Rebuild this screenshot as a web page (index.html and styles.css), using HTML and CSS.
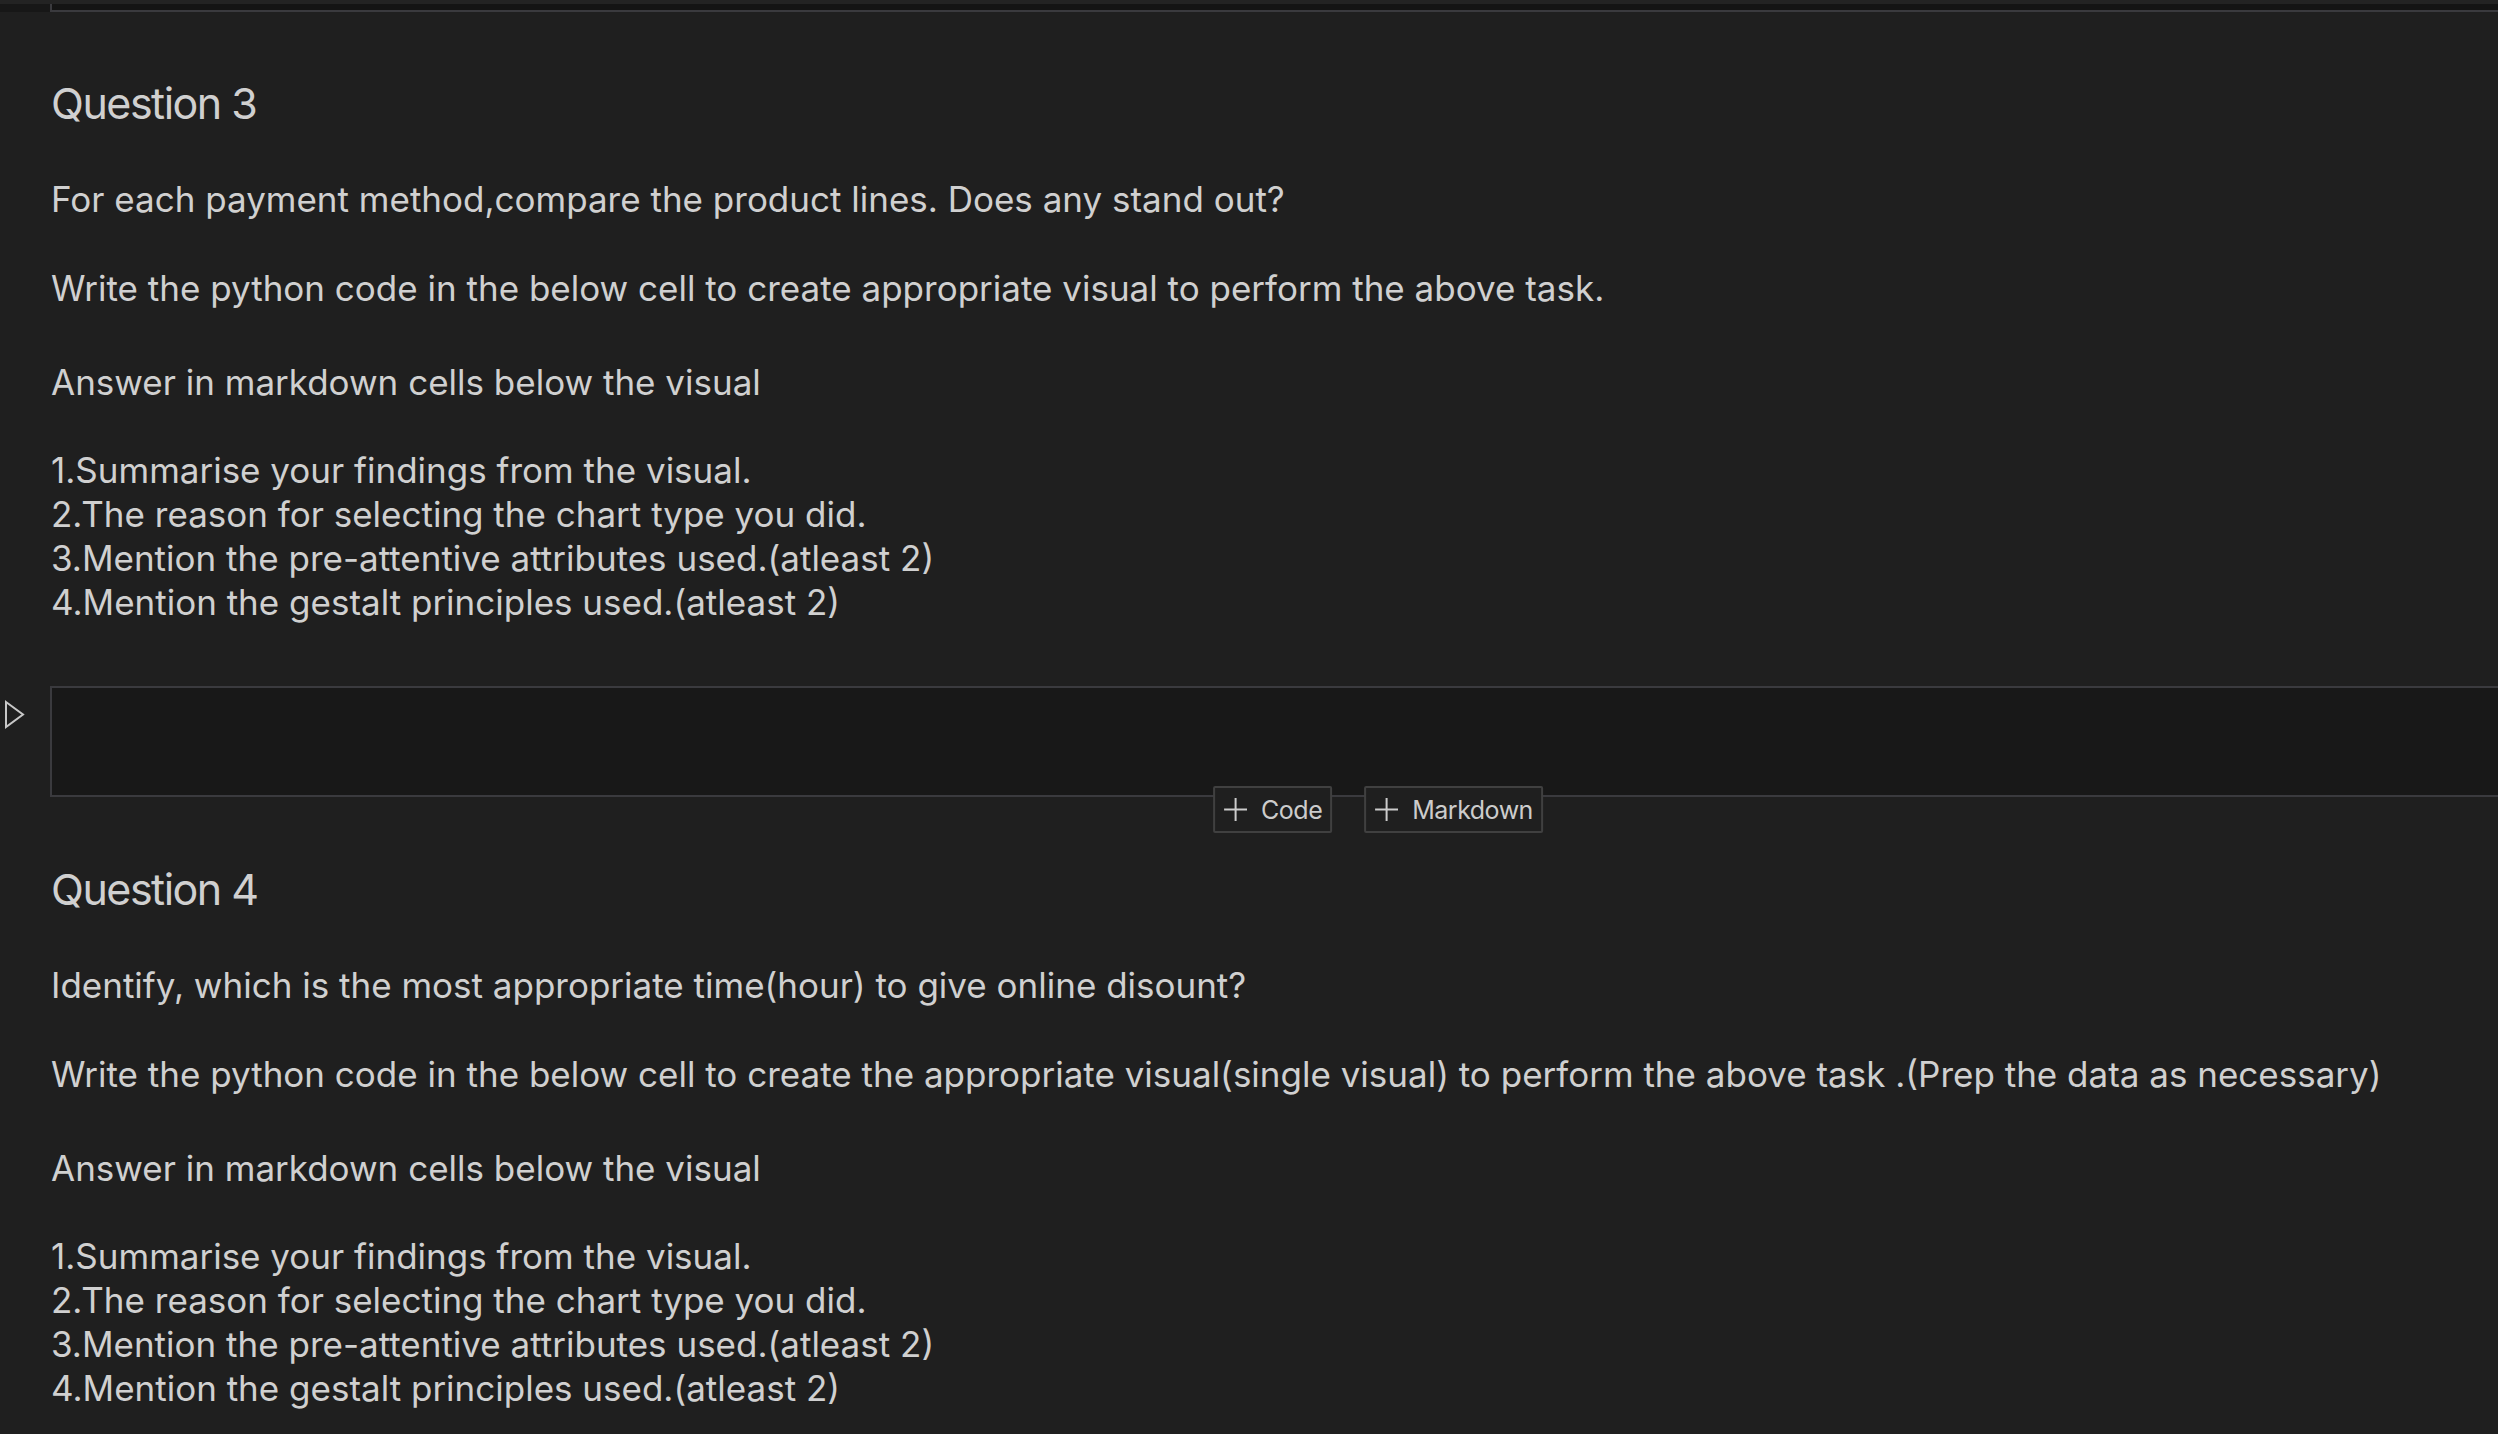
FILE: index.html
```html
<!DOCTYPE html>
<html lang="en">
<head>
<meta charset="utf-8">
<title>Notebook</title>
<link rel="stylesheet" href="styles.css">
</head>
<body>
<div class="top-strip"></div>
<div class="prev-row">
  <div class="prev-gutter"></div>
  <div class="prev-cell"></div>
</div>

<section class="md">
  <h2 class="q">Question 3</h2>
  <p class="p">For each payment method,compare the product lines. Does any stand out?</p>
  <p class="p p-write">Write the python code in the below cell to create appropriate visual to perform the above task.</p>
  <p class="p p-answer">Answer in markdown cells below the visual</p>
  <p class="p list">1.Summarise your findings from the visual.<br>2.The reason for selecting the chart type you did.<br>3.Mention the pre-attentive attributes used.(atleast 2)<br>4.Mention the gestalt principles used.(atleast 2)</p>
</section>

<div class="cell-row">
  <div class="gutter">
    <svg class="run" width="22" height="30" viewBox="0 0 22 30"><polygon points="2,2 19,14.5 2,27" fill="none" stroke="#c8c8c8" stroke-width="2" stroke-linejoin="miter"/></svg>
  </div>
  <div class="cell">
    <div class="toolbar">
      <button class="btn"><svg class="plus" width="23" height="23" viewBox="0 0 23 23"><path d="M11.5 0V23M0 11.5H23" stroke="#cccccc" stroke-width="2"/></svg><span>Code</span></button>
      <button class="btn"><svg class="plus" width="23" height="23" viewBox="0 0 23 23"><path d="M11.5 0V23M0 11.5H23" stroke="#cccccc" stroke-width="2"/></svg><span>Markdown</span></button>
    </div>
  </div>
</div>

<section class="md md2">
  <h2 class="q">Question 4</h2>
  <p class="p">Identify, which is the most appropriate time(hour) to give online disount?</p>
  <p class="p p-write">Write the python code in the below cell to create the appropriate visual(single visual) to perform the above task .(Prep the data as necessary)</p>
  <p class="p p-answer">Answer in markdown cells below the visual</p>
  <p class="p list">1.Summarise your findings from the visual.<br>2.The reason for selecting the chart type you did.<br>3.Mention the pre-attentive attributes used.(atleast 2)<br>4.Mention the gestalt principles used.(atleast 2)</p>
</section>
</body>
</html>
```

FILE: styles.css
```css
html, body {
  margin: 0;
  padding: 0;
}
body {
  width: 2498px;
  height: 1434px;
  overflow: hidden;
  background: #1f1f1f;
  color: #d0d0d0;
  font-family: Inter, "Noto Sans", "Liberation Sans", sans-serif;
}

.top-strip {
  height: 4px;
  background: #232323;
}
.prev-row {
  display: flex;
  height: 8px;
}
.prev-gutter {
  width: 50px;
  background: #171717;
}
.prev-cell {
  flex: 1;
  background: #141414;
  border-left: 2px solid #3a3a3e;
  border-bottom: 2px solid #3a3a3e;
}

.md {
  padding-left: 51px;
  padding-top: 65px;
}
.md2 {
  padding-top: 66px;
}
.q {
  margin: 0 0 48px 0;
  font-size: 43px;
  line-height: 52px;
  font-weight: 400;
  letter-spacing: -1.5px;
  color: #d0d0d0;
}
.p {
  margin: 0 0 45px 0;
  font-size: 35px;
  line-height: 44px;
  letter-spacing: 0;
  white-space: nowrap;
}
.p-write {
  margin-bottom: 50px;
}
.p-answer {
  margin-bottom: 44px;
}
.list {
  margin-bottom: 0;
}

.cell-row {
  display: flex;
  width: 2704px;
  margin-top: 62px;
}
.gutter {
  width: 50px;
  flex: none;
  padding-top: 14px;
}
.run {
  display: block;
  margin-left: 4px;
}
.cell {
  position: relative;
  flex: 1;
  height: 107px;
  background: #181818;
  border: 2px solid #3a3a3e;
  border-right: none;
}
.toolbar {
  position: absolute;
  top: 98px;
  left: 50%;
  transform: translateX(-50%);
  display: flex;
  gap: 32px;
}
.btn {
  display: flex;
  align-items: center;
  height: 47px;
  box-sizing: border-box;
  padding: 0 8px 0 9px;
  background: #1f1f1f;
  border: 2px solid #404040;
  border-radius: 2px;
  color: #cccccc;
  font-family: Inter, "Noto Sans", "Liberation Sans", sans-serif;
  font-size: 25px;
  letter-spacing: -0.5px;
  white-space: nowrap;
}
.plus {
  display: block;
  flex: none;
  margin-right: 14px;
}
```
